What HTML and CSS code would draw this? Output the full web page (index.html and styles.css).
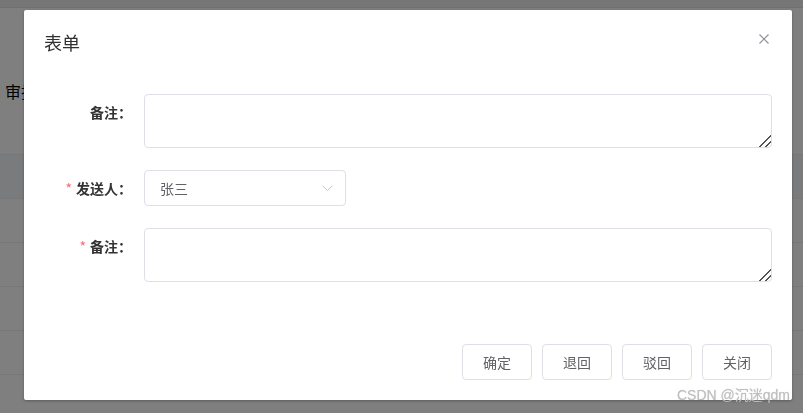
FILE: index.html
```html
<!DOCTYPE html>
<html lang="zh-CN">
<head>
<meta charset="utf-8">
<title>表单</title>
<link rel="stylesheet" href="styles.css">
</head>
<body>
<div class="page">
  <div class="topbar"></div>
  <div class="heading">审批</div>
  <div class="table">
    <div class="row head"><div class="cell c1"></div><div class="cell c2"></div><div class="cell c3"></div></div>
    <div class="row"><div class="cell c1"></div><div class="cell c2"></div><div class="cell c3"></div></div>
    <div class="row"><div class="cell c1"></div><div class="cell c2"></div><div class="cell c3"></div></div>
    <div class="row"><div class="cell c1"></div><div class="cell c2"></div><div class="cell c3"></div></div>
    <div class="row"><div class="cell c1"></div><div class="cell c2"><span>应办人</span></div><div class="cell c3"><span>审核人员</span></div></div>
  </div>
</div>
<div class="overlay">
  <div class="dialog">
    <div class="dlg-header">
      <span class="dlg-title">表单</span>
      <button class="dlg-close" type="button" aria-label="关闭">
        <svg width="10" height="10" viewBox="0 0 10 10"><path d="M0.5 0.5 L9.5 9.5 M9.5 0.5 L0.5 9.5" stroke="#909399" stroke-width="1.2" fill="none"/></svg>
      </button>
    </div>
    <div class="dlg-body">
      <form class="form">
        <div class="item">
          <label class="label">备注：</label>
          <div class="content"><textarea class="textarea"></textarea></div>
        </div>
        <div class="item">
          <label class="label"><span class="req">*</span>发送人：</label>
          <div class="content">
            <div class="select">
              <span class="select-value">张三</span>
              <span class="select-arrow"><svg width="11" height="7" viewBox="0 0 11 7"><path d="M0.7 0.8 L5.5 5.6 L10.3 0.8" stroke="#c0c4cc" stroke-width="1" fill="none"/></svg></span>
            </div>
          </div>
        </div>
        <div class="item">
          <label class="label"><span class="req">*</span>备注：</label>
          <div class="content"><textarea class="textarea"></textarea></div>
        </div>
      </form>
    </div>
    <div class="dlg-footer">
      <button class="btn" type="button">确定</button>
      <button class="btn" type="button">退回</button>
      <button class="btn" type="button">驳回</button>
      <button class="btn" type="button">关闭</button>
    </div>
  </div>
</div>
<div class="watermark">CSDN @沉迷qdm</div>
</body>
</html>
```
FILE: styles.css
```css
* { box-sizing: border-box; }
html, body { margin: 0; padding: 0; }
body {
  width: 803px;
  height: 413px;
  overflow: hidden;
  background: #fff;
  font-family: "Noto Sans CJK SC", "Liberation Sans", sans-serif;
  color: #303133;
}
.page { width: 803px; }
.topbar {
  height: 8px;
  background: #ececec;
  border-bottom: 1px solid #e0e0e0;
}
.heading {
  height: 146px;
  padding: 73px 0 0 5px;
  font-size: 16px;
  line-height: 20px;
  color: #000;
}
.table { border-top: 1px solid #ebeef5; }
.row {
  display: flex;
  height: 44px;
  border-bottom: 1px solid #ebeef5;
}
.row.head { background: #f5f7fa; }
.cell {
  font-size: 14px;
  line-height: 20px;
  padding-top: 12px;
  color: #303133;
}
.c1 { width: 310px; }
.c2 { width: 249px; border-left: 1px solid #ebeef5; padding-left: 10px; }
.c3 { flex: 1; border-left: 1px solid #ebeef5; padding-left: 12px; }

.overlay {
  position: fixed;
  inset: 0;
  background: rgba(0, 0, 0, 0.5);
  display: flex;
  align-items: flex-start;
}
.dialog {
  margin: 10px 0 0 24px;
  width: 768px;
  background: #fff;
  border-radius: 2px;
  box-shadow: 0 1px 3px rgba(0, 0, 0, 0.3);
}
.dlg-header {
  display: flex;
  justify-content: space-between;
  align-items: flex-start;
  padding: 20px 20px 10px;
}
.dlg-title {
  font-size: 18px;
  line-height: 24px;
  color: #303133;
}
.dlg-close {
  border: 0;
  background: transparent;
  padding: 0;
  margin: 4px 3px 0 0;
  width: 10px;
  height: 10px;
  display: block;
}
.dlg-close svg { display: block; }
.dlg-body { padding: 30px 20px; }
.form { margin: 0; }
.item {
  display: flex;
  align-items: flex-start;
  margin-bottom: 22px;
}
.label {
  width: 100px;
  flex: none;
  padding-right: 12px;
  text-align: right;
  font-size: 14px;
  line-height: 36px;
  font-weight: 700;
  color: #333;
}
.req {
  color: #f56c6c;
  margin-right: 4px;
  font-weight: 400;
}
.content { flex: 1; min-width: 0; }
.textarea {
  display: block;
  width: 100%;
  height: 54px;
  padding: 5px 15px;
  border: 1px solid #dcdfe6;
  border-radius: 4px;
  resize: vertical;
  font-family: inherit;
  font-size: 14px;
  line-height: 1.5;
  color: #606266;
  background: #fff;
  outline: none;
}
.textarea::-webkit-resizer {
  background:
    linear-gradient(135deg,
      transparent 0 58%,
      #555 58% 65%,
      transparent 65% 78%,
      #555 78% 85%,
      transparent 85%);
}
.select {
  width: 202px;
  height: 36px;
  border: 1px solid #dcdfe6;
  border-radius: 4px;
  padding: 0 0 0 15px;
  display: flex;
  align-items: center;
  justify-content: space-between;
}
.select-value {
  font-size: 14px;
  color: #606266;
  line-height: 34px;
}
.select-arrow {
  width: 25px;
  margin-right: 5px;
  display: flex;
  justify-content: center;
  align-items: center;
}
.select-arrow svg { display: block; }
.dlg-footer {
  display: flex;
  justify-content: flex-end;
  gap: 10px;
  padding: 10px 20px 20px;
}
.btn {
  width: 70px;
  height: 36px;
  padding: 0;
  border: 1px solid #dcdfe6;
  border-radius: 4px;
  background: #fff;
  color: #606266;
  font-family: inherit;
  font-size: 14px;
  line-height: 34px;
}
.watermark {
  position: fixed;
  right: 13px;
  top: 386px;
  font-size: 14px;
  line-height: 18px;
  color: rgba(190, 190, 190, 0.95);
  text-shadow: 0 0 1px rgba(120, 120, 120, 0.35);
  font-family: "Liberation Sans", "Noto Sans CJK SC", sans-serif;
  white-space: nowrap;
}
```
